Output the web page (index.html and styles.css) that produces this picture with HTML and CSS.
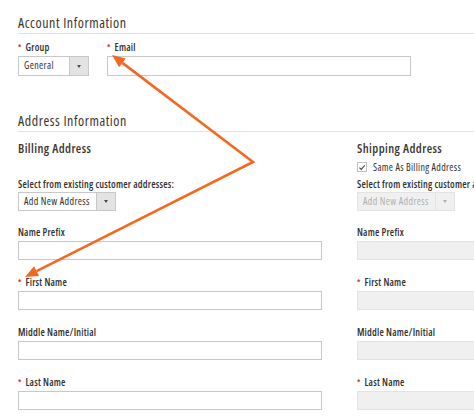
FILE: index.html
```html
<!DOCTYPE html>
<html>
<head>
<meta charset="utf-8">
<link rel="stylesheet" href="styles.css">
</head>
<body>
<div class="page">
  <h2 class="section-title">Account Information</h2>
  <div class="account-row">
    <div class="field">
      <label class="label"><span class="req">*</span>Group</label>
      <div class="select group-select"><span class="select-text">General</span><span class="select-btn"><span class="caret"></span></span></div>
    </div>
    <div class="field">
      <label class="label"><span class="req">*</span>Email</label>
      <div class="input email-input"></div>
    </div>
  </div>

  <h2 class="section-title address-title">Address Information</h2>
  <div class="columns">
    <div class="col">
      <h3 class="col-title">Billing Address</h3>
      <div class="check-row"></div>
      <label class="label select-label">Select from existing customer addresses:</label>
      <div class="select addr-select"><span class="select-text">Add New Address</span><span class="select-btn"><span class="caret"></span></span></div>
      <div class="field-block"><label class="label">Name Prefix</label><div class="input"></div></div>
      <div class="field-block"><label class="label"><span class="req">*</span>First Name</label><div class="input"></div></div>
      <div class="field-block"><label class="label">Middle Name/Initial</label><div class="input"></div></div>
      <div class="field-block"><label class="label"><span class="req">*</span>Last Name</label><div class="input"></div></div>
    </div>
    <div class="col disabled">
      <h3 class="col-title">Shipping Address</h3>
      <div class="check-row"><span class="checkbox"><svg viewBox="0 0 9 9" width="9" height="9"><path d="M1.6 4.6 L3.6 6.6 L7.6 2.2" fill="none" stroke="#444" stroke-width="1.2"/></svg></span><span class="check-text">Same As Billing Address</span></div>
      <label class="label select-label">Select from existing customer addresses:</label>
      <div class="select addr-select"><span class="select-text">Add New Address</span><span class="select-btn"><span class="caret"></span></span></div>
      <div class="field-block"><label class="label">Name Prefix</label><div class="input"></div></div>
      <div class="field-block"><label class="label"><span class="req">*</span>First Name</label><div class="input"></div></div>
      <div class="field-block"><label class="label">Middle Name/Initial</label><div class="input"></div></div>
      <div class="field-block"><label class="label"><span class="req">*</span>Last Name</label><div class="input"></div></div>
    </div>
  </div>
</div>
<svg class="arrows" width="474" height="420" viewBox="0 0 474 420">
  <polyline points="122.4,62.9 253,162 36.6,271.2" fill="none" stroke="#f26a21" stroke-width="2.6" stroke-linejoin="miter"/>
  <polygon points="112,55 125.7,58.5 119.1,67.3" fill="#f26a21"/>
  <polygon points="25,277 39.1,276.1 34.1,266.3" fill="#f26a21"/>
</svg>
</body>
</html>
```

FILE: styles.css
```css
html, body {
  margin: 0;
  padding: 0;
  background: #ffffff;
}
body {
  width: 474px;
  height: 420px;
  overflow: hidden;
  position: relative;
  font-family: "Open Sans", "Liberation Sans", sans-serif;
  font-stretch: condensed;
  color: #303030;
}
.page {
  padding: 13px 0 0 18px;
}
.section-title {
  margin: 0;
  font-size: 14px;
  font-weight: 400;
  letter-spacing: 0.55px;
  line-height: 20px;
  color: #41362f;
  padding-bottom: 0;
  border-bottom: 1px solid #e3e3e3;
}
.address-title {
  margin-top: 35px;
}
.account-row {
  display: flex;
  gap: 18px;
  margin-top: 5px;
}
.field {
  display: flex;
  flex-direction: column;
}
.label {
  display: block;
  font-size: 10px;
  font-weight: 600;
  letter-spacing: 0.2px;
  line-height: 16px;
  height: 16px;
  color: #303030;
  white-space: nowrap;
  margin-bottom: 1px;
}
.req {
  color: #e22626;
  font-size: 8px;
  margin-right: 4px;
}
.input {
  box-sizing: border-box;
  width: 304px;
  height: 19px;
  border: 1px solid #c8c8c8;
  background: #fff;
}
.email-input {
  height: 20px;
}
.select {
  box-sizing: border-box;
  display: flex;
  height: 19px;
  border: 1px solid #c8c8c8;
  background: #fff;
  font-size: 10px;
  letter-spacing: 0.35px;
  color: #303030;
}
.group-select {
  width: 71px;
  height: 20px;
}
.addr-select {
  width: 98px;
  margin-bottom: 13px;
}
.select-text {
  flex: 1;
  padding-left: 5px;
  line-height: 17px;
  white-space: nowrap;
}
.select-btn {
  width: 18px;
  background: #e3e3e3;
  border-left: 1px solid #c8c8c8;
  display: flex;
  align-items: center;
  justify-content: center;
}
.caret {
  width: 0;
  height: 0;
  border-left: 2.5px solid transparent;
  border-right: 2.5px solid transparent;
  border-top: 3px solid #514943;
}
.columns {
  display: flex;
  gap: 35px;
  margin-top: 9px;
}
.col {
  width: 304px;
  flex: none;
}
.col-title {
  margin: 0;
  font-size: 12.5px;
  font-weight: 600;
  letter-spacing: 0.4px;
  line-height: 16px;
  color: #41362f;
}
.check-row {
  height: 14px;
  margin-top: 3px;
  margin-bottom: 2px;
  display: flex;
  align-items: center;
}
.checkbox {
  box-sizing: border-box;
  width: 10px;
  height: 10px;
  border: 1px solid #c2c2c2;
  display: flex;
  align-items: center;
  justify-content: center;
  margin-right: 6px;
}
.check-text {
  font-size: 10px;
  letter-spacing: 0.3px;
  color: #303030;
  line-height: 14px;
  white-space: nowrap;
}
.select-label {
  margin-bottom: 0;
}
.field-block {
  margin-bottom: 14px;
}
.disabled .select {
  background: #f0f0f0;
  border-color: #e3e3e3;
  color: #b0b0b0;
}
.disabled .select-btn {
  background: #f0f0f0;
  border-left-color: #e3e3e3;
}
.disabled .caret {
  border-top-color: #b0b0b0;
}
.disabled .input {
  background: #f0f0f0;
  border-color: #e3e3e3;
}
.arrows {
  position: absolute;
  left: 0;
  top: 0;
  pointer-events: none;
}
```
